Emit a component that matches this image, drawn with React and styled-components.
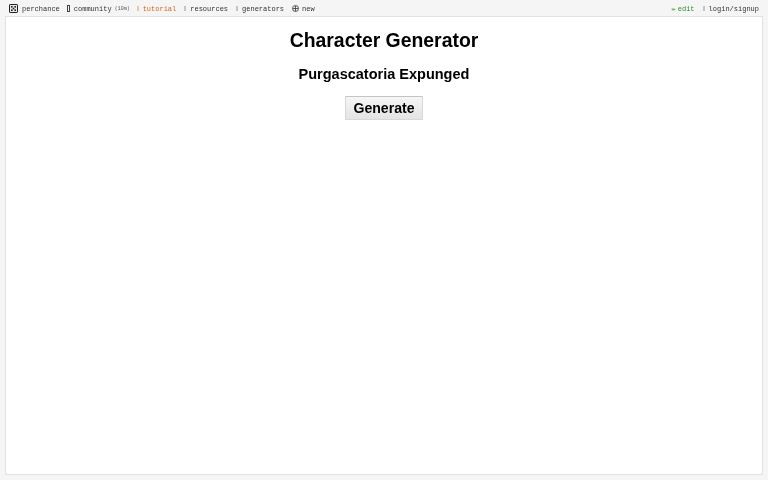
import styled, { createGlobalStyle } from "styled-components";

const GlobalStyle = createGlobalStyle`
  html, body {
    margin: 0;
    padding: 0;
    height: 100%;
    background: #f5f5f5;
  }
  #root {
    height: 100%;
  }
`;

const Page = styled.div`
  height: 480px;
  display: flex;
  flex-direction: column;
  box-sizing: border-box;
  overflow: hidden;
`;

const TopBar = styled.nav`
  height: 16px;
  flex: none;
  display: flex;
  align-items: center;
  justify-content: space-between;
  padding: 1px 9px 0 9px;
  box-sizing: border-box;
  font-family: "Liberation Mono", monospace;
  font-size: 7px;
  color: #333;
  will-change: transform;
`;

const NavGroup = styled.div`
  display: flex;
  align-items: center;
`;

const NavLink = styled.a`
  display: flex;
  align-items: center;
  margin-left: ${(p) => p.$gap || 0}px;
  color: ${(p) => p.$color || "#333"};
  white-space: nowrap;
`;

const Tofu = styled.span`
  display: inline-block;
  box-sizing: border-box;
  width: ${(p) => p.$w || 2}px;
  height: ${(p) => p.$h || 5}px;
  margin-right: ${(p) => p.$mr || 4}px;
  border: 1px solid ${(p) => p.$color || "#c4c4c4"};
`;

const Small = styled.small`
  font-size: 5px;
  margin-left: 3px;
  color: #555;
`;

const IconWrap = styled.span`
  display: inline-flex;
  margin-right: ${(p) => p.$mr || 4}px;
`;

const Card = styled.main`
  flex: 1;
  margin: 0 5px 5px;
  background: #fff;
  border: 1px solid #e2e2e2;
  font-family: "Liberation Sans", Arial, sans-serif;
  color: #000;
`;

const CardBody = styled.div`
  display: flex;
  flex-direction: column;
  align-items: center;
  will-change: transform;
`;

const Title = styled.h1`
  margin: 12px 0 0;
  font-size: 19.4px;
  line-height: 23px;
  font-weight: 700;
`;

const Result = styled.div`
  margin-top: 13px;
  font-size: 14.5px;
  line-height: 18px;
  font-weight: 700;
`;

const GenerateButton = styled.button`
  margin-top: 13px;
  width: 78px;
  height: 24px;
  padding: 0;
  font-family: inherit;
  font-size: 14.1px;
  font-weight: 700;
  color: #000;
  background: linear-gradient(#f6f6f6, #e4e4e4);
  border: 1px solid #d8d8d8;
  border-top-color: #c4c4c4;
  border-radius: 1px;
`;

function Dice() {
  return (
    <svg width="9" height="9" viewBox="0 0 9 9">
      <rect x="0.5" y="0.5" width="8" height="8" rx="0.6" fill="#e8e8e8" stroke="#222" />
      <rect x="2" y="2" width="1.6" height="1.6" fill="#222" />
      <rect x="5.4" y="2" width="1.6" height="1.6" fill="#222" />
      <rect x="3.7" y="3.7" width="1.6" height="1.6" fill="#222" />
      <rect x="2" y="5.4" width="1.6" height="1.6" fill="#222" />
      <rect x="5.4" y="5.4" width="1.6" height="1.6" fill="#222" />
    </svg>
  );
}

function PlusCircle() {
  return (
    <svg width="7" height="7" viewBox="0 0 7 7">
      <circle cx="3.5" cy="3.5" r="3" fill="none" stroke="#333" strokeWidth="0.8" />
      <path d="M3.5 1V6M1 3.5H6" stroke="#333" strokeWidth="0.8" />
    </svg>
  );
}

export default function App() {
  return (
    <Page>
      <GlobalStyle />
      <TopBar>
        <NavGroup>
          <NavLink>
            <IconWrap><Dice /></IconWrap>
            perchance
          </NavLink>
          <NavLink $gap={7}>
            <Tofu $w={3} $h={7} $color="#444" />
            community<Small>(10m)</Small>
          </NavLink>
          <NavLink $gap={7} $color="#d2691e">
            <Tofu $color="#ecc8a8" />
            tutorial
          </NavLink>
          <NavLink $gap={8}>
            <Tofu />
            resources
          </NavLink>
          <NavLink $gap={8}>
            <Tofu />
            generators
          </NavLink>
          <NavLink $gap={8}>
            <IconWrap $mr={3}><PlusCircle /></IconWrap>
            new
          </NavLink>
        </NavGroup>
        <NavGroup>
          <NavLink $color="#2e8b2e">
            <IconWrap $mr={2}>✏</IconWrap>
            edit
          </NavLink>
          <NavLink $gap={8}>
            <Tofu />
            login/signup
          </NavLink>
        </NavGroup>
      </TopBar>
      <Card>
        <CardBody>
          <Title>Character Generator</Title>
          <Result>Purgascatoria Expunged</Result>
          <GenerateButton>Generate</GenerateButton>
        </CardBody>
      </Card>
    </Page>
  );
}
